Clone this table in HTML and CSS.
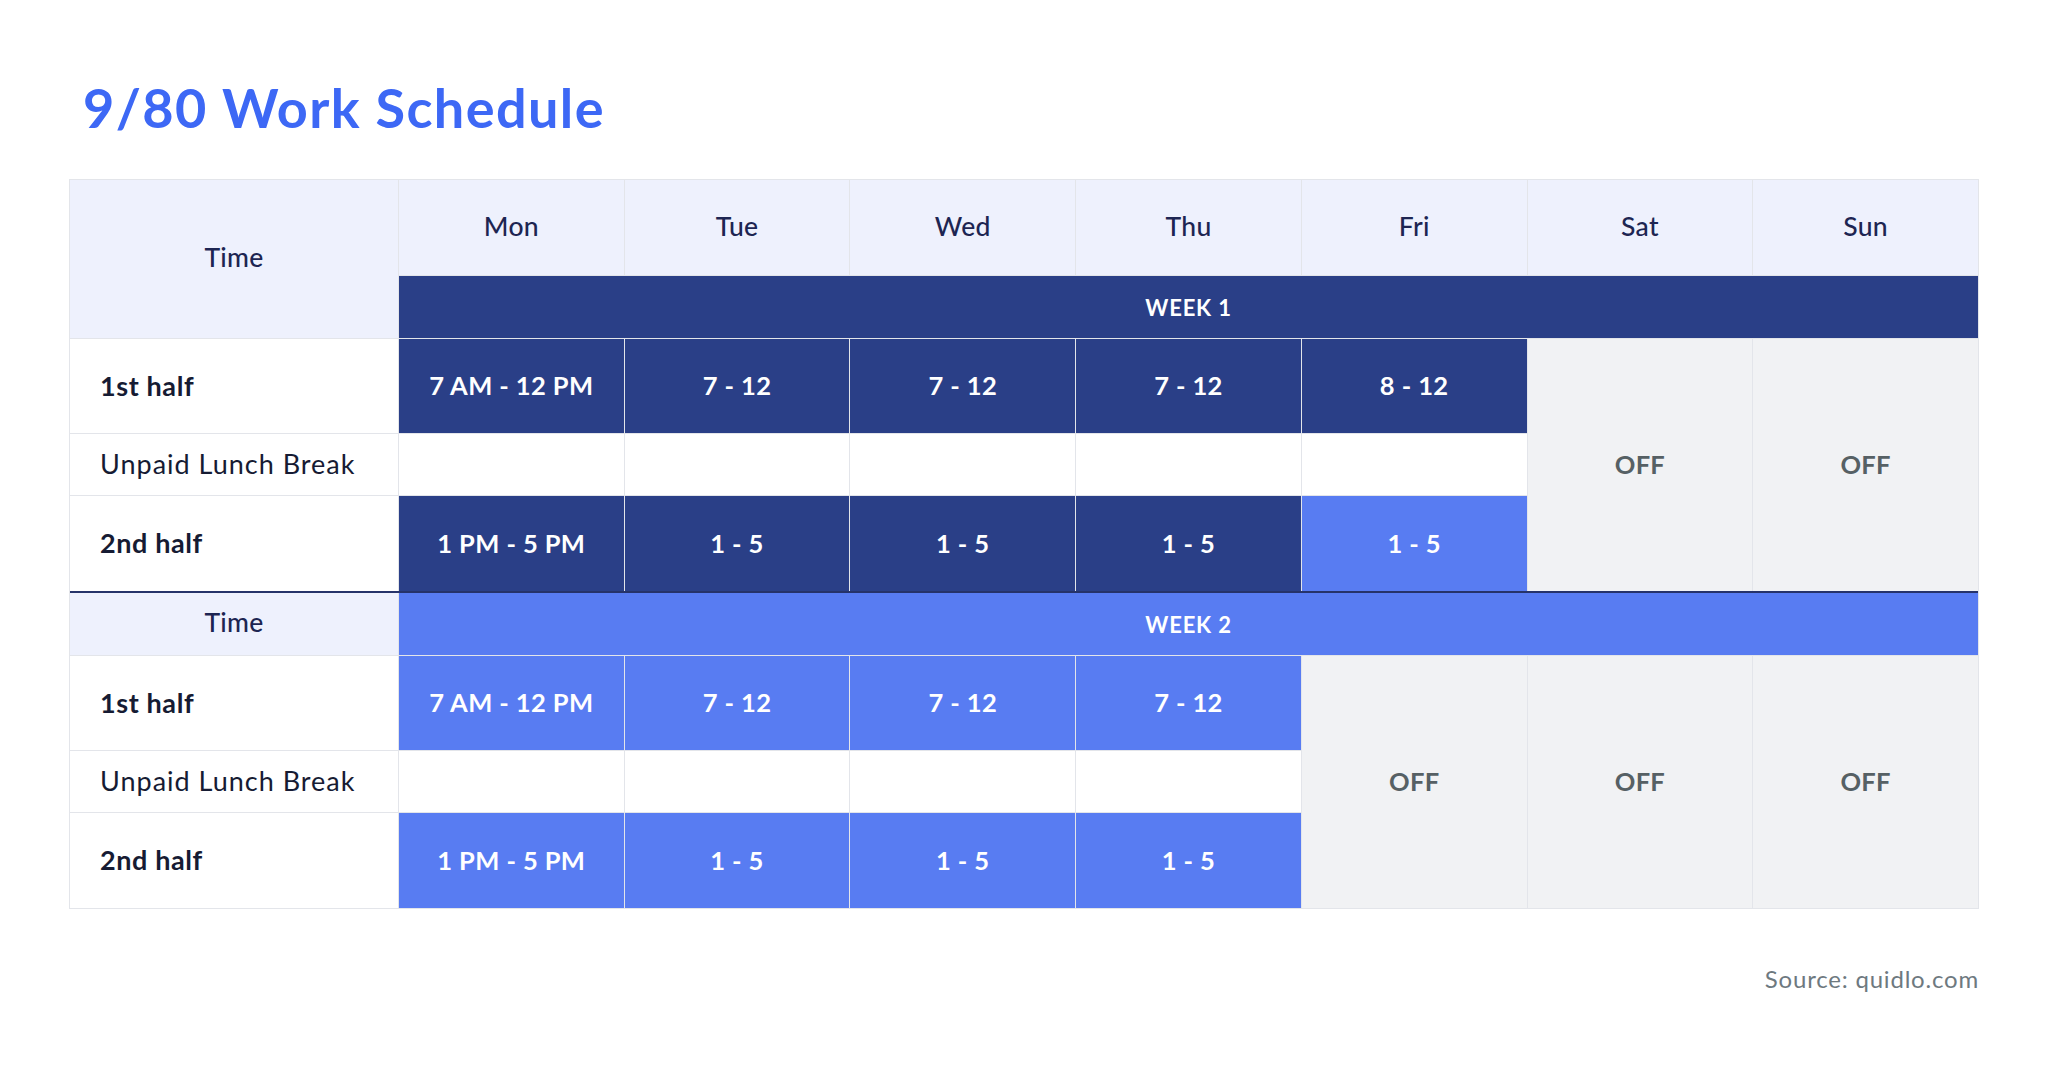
FILE: index.html
```html
<!DOCTYPE html>
<html lang="en">
<head>
<meta charset="utf-8">
<title>9/80 Work Schedule</title>
<link rel="stylesheet" href="styles.css">
</head>
<body>
<div class="page">
  <h1 class="title">9/80 Work Schedule</h1>
  <div class="schedule">
    <div class="week week-1">
      <div class="cell head time-head">Time</div>
      <div class="cell head">Mon</div>
      <div class="cell head">Tue</div>
      <div class="cell head">Wed</div>
      <div class="cell head">Thu</div>
      <div class="cell head">Fri</div>
      <div class="cell head">Sat</div>
      <div class="cell head">Sun</div>
      <div class="bar bar-dark">WEEK 1</div>

      <div class="cell label bold">1st half</div>
      <div class="cell slot dark">7 AM - 12 PM</div>
      <div class="cell slot dark">7 - 12</div>
      <div class="cell slot dark">7 - 12</div>
      <div class="cell slot dark">7 - 12</div>
      <div class="cell slot dark">8 - 12</div>
      <div class="cell off">OFF</div>
      <div class="cell off">OFF</div>

      <div class="cell label">Unpaid Lunch Break</div>
      <div class="cell blank"></div>
      <div class="cell blank"></div>
      <div class="cell blank"></div>
      <div class="cell blank"></div>
      <div class="cell blank"></div>

      <div class="cell label bold">2nd half</div>
      <div class="cell slot dark">1 PM - 5 PM</div>
      <div class="cell slot dark">1 - 5</div>
      <div class="cell slot dark">1 - 5</div>
      <div class="cell slot dark">1 - 5</div>
      <div class="cell slot light">1 - 5</div>
    </div>

    <div class="week week-2">
      <div class="cell head">Time</div>
      <div class="bar bar-light">WEEK 2</div>

      <div class="cell label bold">1st half</div>
      <div class="cell slot light">7 AM - 12 PM</div>
      <div class="cell slot light">7 - 12</div>
      <div class="cell slot light">7 - 12</div>
      <div class="cell slot light">7 - 12</div>
      <div class="cell off">OFF</div>
      <div class="cell off">OFF</div>
      <div class="cell off">OFF</div>

      <div class="cell label">Unpaid Lunch Break</div>
      <div class="cell blank"></div>
      <div class="cell blank"></div>
      <div class="cell blank"></div>
      <div class="cell blank"></div>

      <div class="cell label bold">2nd half</div>
      <div class="cell slot light">1 PM - 5 PM</div>
      <div class="cell slot light">1 - 5</div>
      <div class="cell slot light">1 - 5</div>
      <div class="cell slot light">1 - 5</div>
    </div>
  </div>
  <p class="source">Source: quidlo.com</p>
</div>
</body>
</html>
```

FILE: styles.css
```css
* {
  box-sizing: border-box;
}

html, body {
  margin: 0;
  padding: 0;
  background: #ffffff;
}

body {
  font-family: Lato, "Noto Sans", "Liberation Sans", sans-serif;
  color: #1b2148;
}

.page {
  width: 2048px;
  padding: 81px 69px 0 69px;
}

.title {
  margin: 0 0 44px 14px;
  font-size: 54px;
  line-height: 54px;
  font-weight: 700;
  color: #3d68f5;
  letter-spacing: 1.4px;
}

.schedule {
  width: 1910px;
  border: 1px solid #e3e5ea;
  background: #e3e5ea;
}

.week {
  display: grid;
  grid-template-columns: 328px repeat(7, 1fr);
  column-gap: 1px;
  row-gap: 1px;
  background: #e3e5ea;
}

.week-1 {
  grid-template-rows: 95px 62px 94px 61px 95px;
}

.week-2 {
  grid-template-rows: 62px 94px 61px 95px;
  border-top: 2px solid #26336a;
}

.cell {
  display: flex;
  align-items: center;
  justify-content: center;
  padding-bottom: 2px;
  background: #ffffff;
}

.head {
  background: #eef1fd;
  color: #1d2552;
  font-size: 26.5px;
  font-weight: 500;
  letter-spacing: 0.3px;
  padding-bottom: 4px;
}

.time-head {
  grid-row: span 2;
}

.bar {
  grid-column: 2 / -1;
  display: flex;
  align-items: center;
  justify-content: center;
  color: #ffffff;
  font-size: 22px;
  font-weight: 700;
  letter-spacing: 0.8px;
}

.bar-dark {
  background: #2a3f87;
}

.bar-light {
  background: #587cf2;
}

.label {
  justify-content: flex-start;
  padding-left: 30px;
  font-size: 27px;
  font-weight: 400;
  letter-spacing: 1px;
  color: #161b33;
}

.bold {
  font-weight: 700;
  letter-spacing: 0.6px;
}

.slot {
  color: #ffffff;
  font-size: 25.5px;
  font-weight: 700;
  letter-spacing: 0.4px;
}

.dark {
  background: #2a3f87;
}

.light {
  background: #587cf2;
}

.off {
  grid-row: span 3;
  background: #f1f2f4;
  color: #566064;
  font-size: 25.5px;
  font-weight: 700;
  letter-spacing: 0.3px;
}

.source {
  width: 1910px;
  margin: 56px 0 0 0;
  text-align: right;
  font-size: 24px;
  line-height: 28px;
  letter-spacing: 0.8px;
  color: #6e797f;
}
```
